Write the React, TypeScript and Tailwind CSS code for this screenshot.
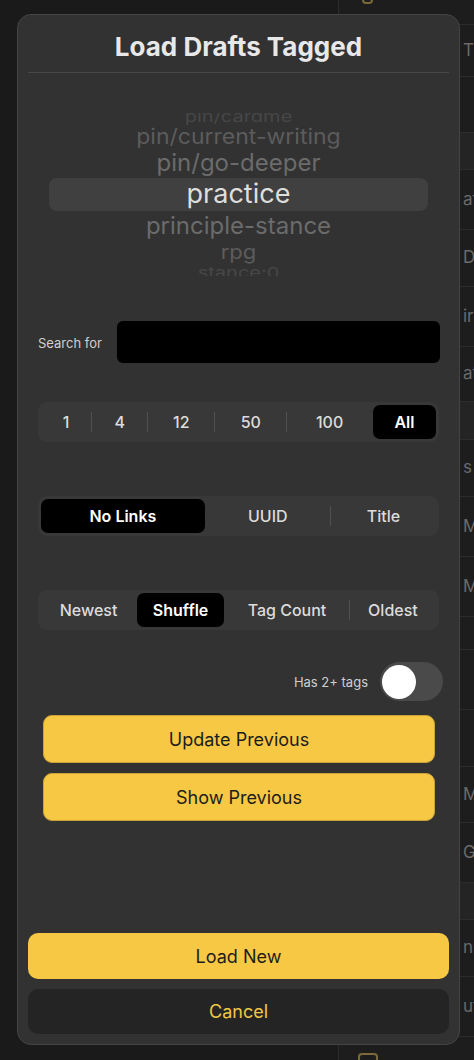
import React from 'react'

type Seg = { label: string; w: number }

const counts: Seg[] = [
  { label: '1', w: 51 },
  { label: '4', w: 56 },
  { label: '12', w: 67 },
  { label: '50', w: 72 },
  { label: '100', w: 86 },
  { label: 'All', w: 64 },
]

const links: Seg[] = [
  { label: 'No Links', w: 165 },
  { label: 'UUID', w: 125 },
  { label: 'Title', w: 106 },
]

const orders: Seg[] = [
  { label: 'Newest', w: 96 },
  { label: 'Shuffle', w: 88 },
  { label: 'Tag Count', w: 125 },
  { label: 'Oldest', w: 87 },
]

// rows of the list behind the sheet; only their left-most letters peek out
const bgRows = [
  { h: 52, text: 'T' },
  { h: 56, text: '' },
  { h: 37, text: '', light: true },
  { h: 60, text: 'af' },
  { h: 57, text: 'Dr' },
  { h: 60, text: 'ir' },
  { h: 55, text: 'at' },
  { h: 38, text: '', light: true },
  { h: 57, text: 's' },
  { h: 60, text: 'M' },
  { h: 60, text: 'M' },
  { h: 33, text: '' },
  { h: 60, text: '' },
  { h: 57, text: '' },
  { h: 56, text: 'Me' },
  { h: 60, text: 'G' },
  { h: 37, text: '', light: true },
  { h: 57, text: 'nn' },
  { h: 60, text: 'ut' },
]

function Segmented({ items, selected }: { items: Seg[]; selected: number }) {
  return (
    <div className="flex h-10 items-stretch rounded-[9px] bg-[#383838] p-[3px]">
      {items.map((it, i) => {
        const on = i === selected
        const showSep = i > 0 && i !== selected && i - 1 !== selected
        return (
          <React.Fragment key={it.label}>
            {i > 0 && (
              <div className={`my-auto h-5 w-px ${showSep ? 'bg-[#505050]' : 'bg-transparent'}`} />
            )}
            <div
              style={{ width: it.w }}
              className={`flex items-center justify-center rounded-[7px] text-[16px] ${
                on ? 'bg-black font-semibold text-white' : 'font-medium text-[#dcdcdc]'
              }`}
            >
              {it.label}
            </div>
          </React.Fragment>
        )
      })}
    </div>
  )
}

export default function App() {
  return (
    <div className="relative h-[1060px] w-[474px] overflow-hidden bg-[#1a1a1a] font-['Inter',sans-serif]">
      {/* app behind the sheet */}
      <div className="flex h-full">
        <div className="w-[338px] shrink-0" />
        <div className="flex min-w-0 flex-1 flex-col border-l border-[#2c2c2c] bg-[#1d1d1d]">
          <div className="flex h-[25px] shrink-0 items-start border-b border-[#2c2c2c] pl-[23px]">
            <div className="-mt-3 h-4 w-[11px] rounded-sm border-2 border-[#7a6a3a]" />
          </div>
          {bgRows.map((r, i) => (
            <div
              key={i}
              style={{ height: r.h }}
              className={`flex shrink-0 items-center whitespace-nowrap border-b border-[#2c2c2c] pl-[124px] text-[17px] text-[#6a6a6a] ${
                r.light ? 'bg-[#242424]' : ''
              }`}
            >
              {r.text}
            </div>
          ))}
          <div className="flex-1 pl-[19px] pt-4">
            <div className="h-4 w-5 rounded-sm border-2 border-[#7a6a3a]" />
          </div>
        </div>
      </div>

      {/* sheet */}
      <div className="absolute left-[17px] top-[14px] flex h-[1031px] w-[443px] flex-col rounded-[14px] border border-[#444] bg-[#323232]">
        <div className="mx-[10px] flex h-[58px] items-center justify-center border-b border-[#474747] pt-[5px]">
          <h1 className="text-[26px] font-bold text-[#e8e8e8]">Load Drafts Tagged</h1>
        </div>

        {/* tag picker */}
        <div className="mt-[40px] flex h-[163px] flex-col overflow-hidden text-center">
          <div className="-mt-[6px] flex h-[20px] shrink-0 scale-y-75 items-center justify-center text-[20px] text-[#474747]">
            pin/cardme
          </div>
          <div className="flex h-[21px] shrink-0 scale-y-90 items-center justify-center text-[23px] text-[#5c5c5c]">
            pin/current-writing
          </div>
          <div className="flex h-[30px] shrink-0 items-center justify-center text-[24px] text-[#6b6b6b]">
            pin/go-deeper
          </div>
          <div className="mx-[31px] flex h-[33px] shrink-0 items-center justify-center rounded-[8px] bg-[#404040] text-[27px] text-[#dedede]">
            practice
          </div>
          <div className="flex h-[30px] shrink-0 items-center justify-center text-[24px] text-[#6b6b6b]">
            principle-stance
          </div>
          <div className="flex h-[22px] shrink-0 scale-y-90 items-center justify-center text-[22px] text-[#5c5c5c]">
            rpg
          </div>
          <div className="flex h-[20px] shrink-0 scale-y-75 items-center justify-center text-[20px] text-[#474747]">
            stance:0
          </div>
        </div>

        <div className="mt-[45px] flex items-center pl-[20px] pr-[19px]">
          <span className="w-[79px] pt-[3px] text-[13px] text-[#cfcfcf]">Search for</span>
          <div className="h-[42px] flex-1 rounded-[6px] bg-black" />
        </div>

        <div className="mt-[39px] px-[20px]">
          <Segmented items={counts} selected={5} />
        </div>
        <div className="mt-[54px] px-[20px]">
          <Segmented items={links} selected={0} />
        </div>
        <div className="mt-[54px] px-[20px]">
          <Segmented items={orders} selected={1} />
        </div>

        <div className="mt-[32px] flex items-center justify-end gap-3 pr-[16px]">
          <span className="pt-[3px] text-[13px] text-[#cfcfcf]">Has 2+ tags</span>
          <div className="flex h-[39px] w-[63px] items-center rounded-full bg-[#4a4a4a] px-[2px]">
            <div className="h-[34px] w-[34px] rounded-full bg-white" />
          </div>
        </div>

        <div className="mt-[14px] flex flex-col gap-[10px] pl-[25px] pr-[24px]">
          <button className="h-[48px] rounded-[9px] border border-[#c9a23a] bg-[#f6c844] text-[18px] text-[#1c1c1c]">
            Update Previous
          </button>
          <button className="h-[48px] rounded-[9px] border border-[#c9a23a] bg-[#f6c844] text-[18px] text-[#1c1c1c]">
            Show Previous
          </button>
        </div>

        <div className="flex-1" />

        <div className="flex flex-col gap-[10px] px-[10px] pb-[10px]">
          <button className="h-[46px] rounded-[10px] bg-[#f6c844] text-[18px] text-[#1c1c1c]">Load New</button>
          <button className="h-[45px] rounded-[10px] bg-[#242424] text-[18px] text-[#f2c744]">Cancel</button>
        </div>
      </div>
    </div>
  )
}
